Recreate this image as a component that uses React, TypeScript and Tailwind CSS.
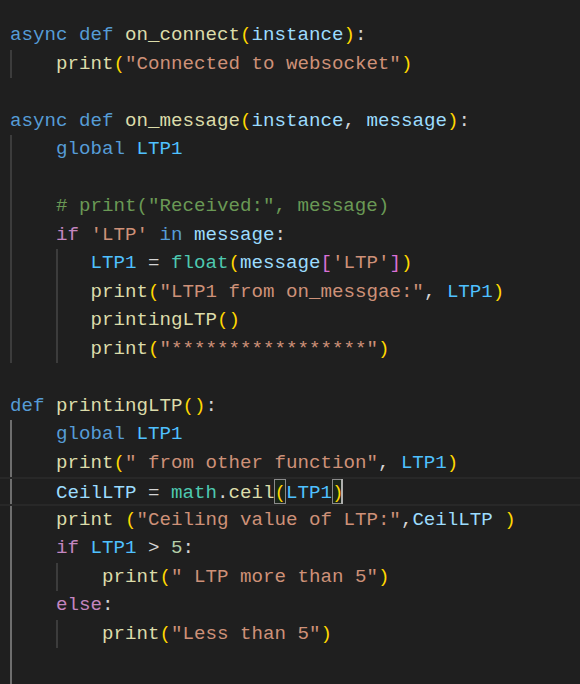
import React from 'react';

// token colours (VS Code dark modern, python)
const C = {
  kw: 'text-[#569cd6]',
  fn: 'text-[#dcdcaa]',
  param: 'text-[#9cdcfe]',
  str: 'text-[#ce9178]',
  b1: 'text-[#ffd700]',
  b2: 'text-[#da70d6]',
  op: 'text-[#d4d4d4]',
  konst: 'text-[#4fc1ff]',
  cmt: 'text-[#6a9955]',
  ctl: 'text-[#c586c0]',
  cls: 'text-[#4ec9b0]',
  num: 'text-[#b5cea8]',
};

type Tok = [string, keyof typeof C, ('box' | 'boxCursor')?];
type Guide = { w: number; active?: boolean };
type Line = { guides?: Guide[]; toks?: Tok[]; current?: boolean };

const g4: Guide = { w: 4 };
const g3: Guide = { w: 3 };
const a4: Guide = { w: 4, active: true };

const lines: Line[] = [
  { toks: [['async', 'kw'], [' ', 'op'], ['def', 'kw'], [' ', 'op'], ['on_connect', 'fn'], ['(', 'b1'], ['instance', 'param'], [')', 'b1'], [':', 'op']] },
  { guides: [g4], toks: [['print', 'fn'], ['(', 'b1'], ['"Connected to websocket"', 'str'], [')', 'b1']] },
  {},
  { toks: [['async', 'kw'], [' ', 'op'], ['def', 'kw'], [' ', 'op'], ['on_message', 'fn'], ['(', 'b1'], ['instance', 'param'], [', ', 'op'], ['message', 'param'], [')', 'b1'], [':', 'op']] },
  { guides: [g4], toks: [['global', 'kw'], [' ', 'op'], ['LTP1', 'konst']] },
  { guides: [g4] },
  { guides: [g4], toks: [['# print("Received:", message)', 'cmt']] },
  { guides: [g4], toks: [['if', 'ctl'], [' ', 'op'], ["'LTP'", 'str'], [' ', 'op'], ['in', 'kw'], [' ', 'op'], ['message', 'param'], [':', 'op']] },
  { guides: [g4, g3], toks: [['LTP1', 'konst'], [' = ', 'op'], ['float', 'cls'], ['(', 'b1'], ['message', 'param'], ['[', 'b2'], ["'LTP'", 'str'], [']', 'b2'], [')', 'b1']] },
  { guides: [g4, g3], toks: [['print', 'fn'], ['(', 'b1'], ['"LTP1 from on_messgae:"', 'str'], [', ', 'op'], ['LTP1', 'konst'], [')', 'b1']] },
  { guides: [g4, g3], toks: [['printingLTP', 'fn'], ['()', 'b1']] },
  { guides: [g4, g3], toks: [['print', 'fn'], ['(', 'b1'], ['"*****************"', 'str'], [')', 'b1']] },
  {},
  { toks: [['def', 'kw'], [' ', 'op'], ['printingLTP', 'fn'], ['()', 'b1'], [':', 'op']] },
  { guides: [a4], toks: [['global', 'kw'], [' ', 'op'], ['LTP1', 'konst']] },
  { guides: [a4], toks: [['print', 'fn'], ['(', 'b1'], ['" from other function"', 'str'], [', ', 'op'], ['LTP1', 'konst'], [')', 'b1']] },
  { guides: [a4], current: true, toks: [['CeilLTP', 'param'], [' = ', 'op'], ['math', 'cls'], ['.', 'op'], ['ceil', 'fn'], ['(', 'b1', 'box'], ['LTP1', 'konst'], [')', 'b1', 'boxCursor']] },
  { guides: [a4], toks: [['print', 'fn'], [' ', 'op'], ['(', 'b1'], ['"Ceiling value of LTP:"', 'str'], [',', 'op'], ['CeilLTP', 'param'], [' ', 'op'], [')', 'b1']] },
  { guides: [a4], toks: [['if', 'ctl'], [' ', 'op'], ['LTP1', 'konst'], [' > ', 'op'], ['5', 'num'], [':', 'op']] },
  { guides: [a4, g4], toks: [['print', 'fn'], ['(', 'b1'], ['" LTP more than 5"', 'str'], [')', 'b1']] },
  { guides: [a4], toks: [['else', 'ctl'], [':', 'op']] },
  { guides: [a4, g4], toks: [['print', 'fn'], ['(', 'b1'], ['"Less than 5"', 'str'], [')', 'b1']] },
  { guides: [a4] },
  { guides: [a4] },
];

const CodeLine = ({ line }: { line: Line }) => (
  <div
    className={
      'flex h-[28.5px] leading-[28.5px] whitespace-pre ' +
      (line.current ? 'border-y-2 border-[#282828] leading-[24.5px] -mx-[10px] px-[10px]' : '')
    }
  >
    {line.guides?.map((g, i) => (
      <span
        key={'g' + i}
        className={g.active ? 'shadow-[inset_2px_0_0_#6e6e6e]' : 'shadow-[inset_2px_0_0_#3c3c3c]'}
      >
        {' '.repeat(g.w)}
      </span>
    ))}
    {line.toks?.map(([text, col, extra], i) => (
      <React.Fragment key={i}>
        <span
          className={
            C[col] + (extra ? ' bg-[#0064001a] shadow-[inset_0_0_0_1px_#8a8a8a]' : '')
          }
        >
          {text}
        </span>
        {extra === 'boxCursor' && <span className="w-[2px] -ml-[2px] bg-[#aeafad]" />}
      </React.Fragment>
    ))}
  </div>
);

export default function App() {
  return (
    <div className="h-screen overflow-hidden bg-[#1f1f1f] pl-[10px] pt-[21px] font-['Liberation_Mono',monospace] text-[19.17px] antialiased">
      {lines.map((l, i) => (
        <CodeLine key={i} line={l} />
      ))}
    </div>
  );
}
